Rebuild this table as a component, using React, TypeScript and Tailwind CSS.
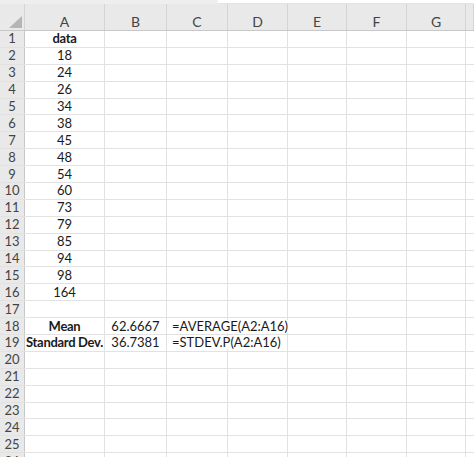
import React from 'react';

const cols = [
  { name: 'A', w: 'w-[80px]' },
  { name: 'B', w: 'w-[62px]' },
  { name: 'C', w: 'w-[61px]' },
  { name: 'D', w: 'w-[60px]' },
  { name: 'E', w: 'w-[59px]' },
  { name: 'F', w: 'w-[60px]' },
  { name: 'G', w: 'w-[59px]' },
  { name: 'H', w: 'flex-1' },
];

type Row = { a?: string; b?: string; c?: string; bold?: boolean };

const data = [18, 24, 26, 34, 38, 45, 48, 54, 60, 73, 79, 85, 94, 98, 164];

const rows: Row[] = [
  { a: 'data', bold: true },
  ...data.map((n) => ({ a: String(n) })),
  {},
  { a: 'Mean', b: '62.6667', c: '=AVERAGE(A2:A16)', bold: true },
  { a: 'Standard Dev.', b: '36.7381', c: '=STDEV.P(A2:A16)', bold: true },
  {},
  {},
  {},
  {},
  {},
  {},
  {},
];

const App = () => {
  return (
    <div className="w-[474px] h-[457px] overflow-hidden bg-white font-['Lato','Liberation_Sans',sans-serif] text-[13px] text-[#1a1a1a]">
      {/* strip above the sheet */}
      <div className="flex h-[4px]">
        <div className="w-[218px] bg-[#eeeeee]" />
        <div className="flex-1 bg-white border-b border-[#e4e4e4]" />
      </div>

      {/* column headers */}
      <div className="flex h-[27px] bg-[#e9e9e9] border-b border-[#c8c8c8]">
        <div className="w-[25px] shrink-0 relative border-r border-[#d4d4d4]">
          <div className="absolute right-[2px] bottom-[2px] w-0 h-0 border-l-[13px] border-l-transparent border-b-[12px] border-b-[#b5b5b5]" />
        </div>
        {cols.map((c) => (
          <div
            key={c.name}
            className={`${c.w} shrink-0 flex items-center justify-center pt-[9px] border-r border-[#d4d4d4] text-[#444] text-[14px] leading-none`}
          >
            {c.name === 'H' ? '' : c.name}
          </div>
        ))}
      </div>

      {rows.map((r, i) => (
        <div key={i} className="flex h-[16.9px] border-b border-[#e2e2e2]">
          <div className="w-[25px] shrink-0 bg-[#e9e9e9] border-r border-[#c8c8c8] flex items-center justify-center text-[#444] leading-none">
            {i + 1}
          </div>
          <div
            className={`w-[80px] shrink-0 border-r border-[#e2e2e2] flex items-center justify-center leading-none whitespace-nowrap ${
              r.bold ? 'font-bold tracking-[-0.3px]' : ''
            }`}
          >
            {r.a}
          </div>
          <div className="w-[62px] shrink-0 border-r border-[#e2e2e2] flex items-center justify-center leading-none">
            {r.b}
          </div>
          <div className="w-[61px] shrink-0 border-r border-[#e2e2e2] relative flex items-center leading-none">
            {r.c && <span className="absolute left-[5px] whitespace-nowrap bg-white">{r.c}</span>}
          </div>
          <div className="w-[60px] shrink-0 border-r border-[#e2e2e2]" />
          <div className="w-[59px] shrink-0 border-r border-[#e2e2e2]" />
          <div className="w-[60px] shrink-0 border-r border-[#e2e2e2]" />
          <div className="w-[59px] shrink-0 border-r border-[#e2e2e2]" />
          <div className="flex-1" />
        </div>
      ))}
    </div>
  );
};

export default App;
